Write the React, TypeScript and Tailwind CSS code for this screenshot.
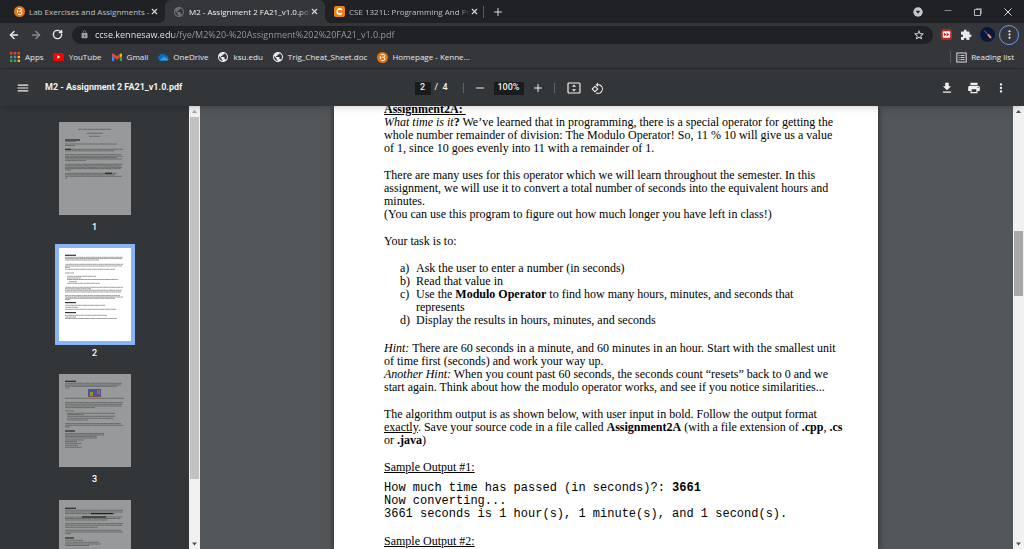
import React from 'react';
import { ArrowLeft, ArrowRight, Plus, Minus, RotateCw, X } from 'lucide-react';
import { MdDownload, MdExtension, MdLock, MdMenu, MdMoreVert, MdPrint, MdPublic, MdRotate90DegreesCcw, MdStarBorder } from 'react-icons/md';

// [x, y, width, bold]
type Row = [number, number, number, boolean?];

const page1: Row[] = [
  [19, 7.3, 33], [27.6, 11.3, 16], [30, 14.3, 11],
  [6, 18, 15, true], [6, 19.5, 11], [6, 22, 52], [6, 23.5, 10],
  [6, 27.3, 6, true], [12, 27.3, 52], [6, 28.8, 49],
  [6, 32.6, 56], [6, 34.3, 58], [6, 35.6, 52], [6, 37, 57], [6, 38.6, 21],
  [6, 42.3, 58], [6, 43.8, 56], [6, 45.3, 57], [6, 46.6, 56], [6, 48, 6],
  [6, 51.3, 52], [46, 51.3, 7, true], [6, 52.8, 50], [6, 54.3, 57], [6, 56, 2],
];

const page2: Row[] = [
  [6, 7.3, 11, true], [6, 9.3, 58], [6, 10.6, 57], [6, 12, 34],
  [6, 16.3, 58], [6, 18, 57], [6, 19.3, 5], [6, 21.3, 50], [6, 25, 9],
  [8, 28.3, 29], [8, 30, 14], [8, 31.5, 51], [10, 33.6, 8], [8, 35.3, 33],
  [6, 39.3, 58], [6, 40.8, 26], [6, 42.3, 57], [6, 44, 56],
  [6, 47.6, 55], [6, 49, 58], [6, 50.3, 50], [6, 51.6, 5],
  [6, 54.6, 11, true], [6, 57.3, 40], [6, 59.3, 13], [6, 61.3, 51],
  [6, 64.6, 11, true], [6, 67.3, 42], [6, 69, 11], [6, 70.5, 52],
];

const page3: Row[] = [
  [6, 7.3, 11, true], [6, 9.3, 57], [6, 11, 56], [6, 12.3, 52], [6, 14, 4],
  [6, 24.3, 59], [6, 28.6, 58], [6, 30.3, 57], [6, 32, 57], [6, 33.6, 30], [6, 37, 9],
  [8, 39.3, 48], [8, 40.6, 17], [8, 42.3, 48], [8, 44.3, 46], [8, 46, 21],
  [6, 49.6, 56], [6, 51.3, 58], [6, 53, 5], [6, 57, 10, true],
  [6, 59.6, 39], [6, 61, 39], [6, 62.4, 32], [6, 64, 32], [6, 66, 19],
  [6, 67.6, 12], [6, 69.3, 16], [6, 71.3, 13], [6, 73.3, 17],
];

const page4: Row[] = [
  [6, 8.3, 11, true], [6, 10.3, 58], [6, 12, 58], [6, 13.6, 50], [32, 13.6, 22, true],
  [6, 17, 57], [23, 17, 24, true], [6, 18.5, 55], [6, 20, 42],
  [6, 23.6, 58], [6, 25.3, 57], [6, 27.3, 33],
  [6, 30.3, 56], [6, 32, 58], [6, 33.6, 6], [6, 38, 9, true],
  [6, 40.3, 18], [6, 42.3, 34], [6, 44, 36], [6, 45.5, 24], [6, 49.3, 32],
];

function Thumb({ num, rows, selected, picture }: { num: number; rows: Row[]; selected?: boolean; picture?: boolean }) {
  return (
    <li className="flex flex-col items-center">
      <button
        aria-label={`Page ${num}`}
        className={selected ? 'bg-white outline-4 outline-[#8ab4f8]' : 'bg-[#98999a]'}
      >
        <svg width="72" height="93" viewBox="0 0 72 93" className="block">
          {rows.map(([x, y, w, bold], i) => (
            <line
              key={i}
              x1={x}
              x2={x + w}
              y1={y}
              y2={y}
              stroke={bold ? '#111' : '#333'}
              strokeOpacity={bold ? 0.85 : 0.6}
              strokeWidth={bold ? 1.2 : 0.8}
              strokeDasharray={bold ? undefined : '3.3 .3 1.6 .2 4.1 .3 2.2 .2'}
              strokeDashoffset={i * 3.7}
            />
          ))}
          {picture && (
            <>
              <rect x="29" y="15" width="13" height="8" fill="#4257a0" />
              <rect x="29" y="21" width="13" height="2" fill="#8a4a3c" />
              <rect x="31" y="18" width="3" height="4" fill="#a08a3c" />
              <rect x="38" y="16" width="3" height="4" fill="#b0603c" />
            </>
          )}
        </svg>
      </button>
      <span className="mt-1.5 mb-[15px] text-[9px] leading-3 font-medium text-white">{num}</span>
    </li>
  );
}

function Arrow({ down, color }: { down?: boolean; color: string }) {
  return (
    <svg width="11" height="11" viewBox="0 0 11 11" className="shrink-0">
      <path d={down ? 'M3 4.500h5L5.500 7.500z' : 'M3 7h5L5.500 4z'} fill={color} />
    </svg>
  );
}

function Globe() {
  return <MdPublic size={12} className="shrink-0" />;
}

function BrandDot() {
  return (
    <svg width="11" height="11" viewBox="0 0 11 11" className="shrink-0">
      <circle cx="5.500" cy="5.500" r="5.500" fill="#e87511" />
      <path d="M4 2.500h2.200a1.400 1.400 0 0 1 0 2.800H4.600M6.200 5.300a1.600 1.600 0 0 1 0 3.200H4.200M3.400 4v3.200" fill="none" stroke="#fff" strokeWidth="0.900" />
    </svg>
  );
}

function Tab({ icon, title, active, fade }: { icon: React.ReactNode; title: string; active?: boolean; fade?: boolean }) {
  return (
    <div className={`relative flex w-40 items-center pr-1.5 pl-2 ${active ? 'rounded-t-md bg-[#35363a]' : ''}`}>
      {active && (
        <>
          <span className="absolute bottom-0 -left-1.5 h-1.5 w-1.5 bg-[radial-gradient(circle_at_0_0,#202124_6px,#35363a_6px)]" />
          <span className="absolute -right-1.5 bottom-0 h-1.5 w-1.5 bg-[radial-gradient(circle_at_100%_0,#202124_6px,#35363a_6px)]" />
        </>
      )}
      <span className={`flex w-3 justify-center ${active ? 'text-[#6d7074]' : ''}`}>{icon}</span>
      <a
        href="#"
        className={`ml-1 flex-1 overflow-hidden whitespace-nowrap ${fade ? '[mask-image:linear-gradient(90deg,#000_90%,transparent)]' : ''} ${active ? 'text-[#f1f3f4]' : 'text-[#bdc1c6]'}`}
      >
        {title}
      </a>
      <button aria-label="Close tab" className="text-[#dadce0]">
        <X size={9} strokeWidth={3} />
      </button>
    </div>
  );
}

function Bookmark({ icon, children }: { icon: React.ReactNode; children: React.ReactNode }) {
  return (
    <a href="#" className="flex items-center gap-1 whitespace-nowrap">
      <span className="flex w-3 justify-center">{icon}</span>
      {children}
    </a>
  );
}

function BrowserBar() {
  return (
    <header className="bg-[#35363a] font-['Open_Sans','Noto_Sans',sans-serif] text-[8px] text-[#e8eaed]">
      {/* tabs */}
      <div className="flex h-[23px] bg-[#202124] pl-[5px]">
        <Tab icon={<BrandDot />} title="Lab Exercises and Assignments -" />
        <Tab active fade icon={<Globe />} title="M2 - Assignment 2 FA21_v1.0.pdf" />
        <Tab
          fade
          icon={
            <svg width="11" height="11" viewBox="0 0 11 11">
              <rect width="11" height="11" rx="2" fill="#f0810f" />
              <path d="M7.800 4A2.600 2.600 0 1 0 7.800 7" fill="none" stroke="#fff" strokeWidth="1.700" />
            </svg>
          }
          title="CSE 1321L: Programming And Pro"
        />
        <div className="flex flex-1 items-center">
          <span className="-ml-0.5 h-3 w-px bg-[#55585c]" />
          <button aria-label="New tab" className="ml-2 text-[#dadce0]">
            <Plus size={12} />
          </button>
        </div>
        <div className="flex items-center gap-5 pr-[11px] text-[#dadce0]">
          <button aria-label="Search tabs">
            <svg width="10" height="10" viewBox="0 0 10 10">
              <circle cx="5" cy="5" r="4.700" fill="#c4c7cb" />
              <path d="M2.700 3.800h4.600L5 6.800z" fill="#202124" />
            </svg>
          </button>
          <button aria-label="Minimize">
            <svg width="10" height="10" viewBox="0 0 10 10">
              <path d="M1.500 3.500h7" stroke="#85888c" />
            </svg>
          </button>
          <button aria-label="Restore">
            <svg width="10" height="10" viewBox="0 0 10 10" fill="none" stroke="#b4b7bb">
              <path d="M1.500 2.500h6v6h-6z" />
              <path d="M3 1.500h5.500V7" stroke="#75787c" />
            </svg>
          </button>
          <button aria-label="Close window">
            <svg width="10" height="10" viewBox="0 0 10 10">
              <path d="M1.500 1.500l7 7M8.500 1.500l-7 7" stroke="#dadce0" />
            </svg>
          </button>
        </div>
      </div>

      {/* address bar */}
      <div className="flex h-[23px] items-center pr-[5px] pl-2">
        <div className="flex w-16 items-center gap-2.5">
          <button aria-label="Back"><ArrowLeft size={12} strokeWidth={3} /></button>
          <button aria-label="Forward" className="text-[#85888c]"><ArrowRight size={12} strokeWidth={3} /></button>
          <button aria-label="Reload"><RotateCw size={11} strokeWidth={3} /></button>
        </div>
        <div className="flex h-[18px] flex-1 items-center rounded-full bg-[#202124] px-2">
          <MdLock size={9} className="text-[#9aa0a6]" />
          <input
            aria-label="Address"
            defaultValue="ccse.kennesaw.edu/fye/M2%20-%20Assignment%202%20FA21_v1.0.pdf"
            className="ml-1.5 flex-1 bg-[linear-gradient(90deg,#f1f3f4_79px,#9aa0a6_79px)] bg-clip-text text-[9px] text-transparent outline-none"
          />
          <button aria-label="Bookmark this page"><MdStarBorder size={12} /></button>
        </div>
        <div className="ml-2 flex items-center gap-2">
          <button aria-label="Video extension">
            <svg width="11" height="11" viewBox="0 0 11 11">
              <rect width="11" height="11" rx="2.500" fill="#c5221f" />
              <rect x="1.800" y="2.300" width="7.400" height="6.400" rx="1" fill="#fff" />
              <path d="M2.800 3.500l2.600 2-2.600 2zM5.600 3.500l2.600 2-2.600 2z" fill="#c5221f" />
            </svg>
          </button>
          <button aria-label="Extensions"><MdExtension size={12} /></button>
          <div className="flex items-center gap-1">
            <button aria-label="Profile">
              <svg width="15" height="15" viewBox="0 0 15 15">
                <circle cx="7.500" cy="7.500" r="7.500" fill="#06193a" />
                <path d="M4 3.500l6 6" stroke="#5b3a6b" strokeWidth="1.500" />
                <path d="M8 7.500l3 3.500" stroke="#e0926a" strokeWidth="2" />
              </svg>
            </button>
            <button aria-label="Customize" className="flex h-5 w-5 items-center justify-center rounded-full border border-[#669df6]">
              <MdMoreVert size={13} />
            </button>
          </div>
        </div>
      </div>

      {/* bookmarks */}
      <nav className="flex h-[22px] items-center gap-[9px] pr-2.5 pl-[9px]">
        <Bookmark
          icon={
            <svg width="10" height="10" viewBox="0 0 10 10">
              <path d="M0 0h2.400v2.400H0zM3.800 0h2.400v2.400H3.800zM7.600 0H10v2.400H7.600z" fill="#ea4335" />
              <path d="M0 3.800h2.400v2.400H0z" fill="#34a853" />
              <path d="M3.800 3.800h2.400v2.400H3.800z" fill="#4285f4" />
              <path d="M7.600 3.800H10v2.400H7.600z" fill="#fbbc04" />
              <path d="M0 7.600h2.400V10H0zM3.800 7.600h2.400V10H3.800z" fill="#34a853" />
              <path d="M7.600 7.600H10V10H7.600z" fill="#fbbc04" />
            </svg>
          }
        >
          Apps
        </Bookmark>
        <Bookmark
          icon={
            <svg width="11" height="8" viewBox="0 0 11 8">
              <rect width="11" height="8" rx="2" fill="#f00" />
              <path d="M4.300 2.200v3.600L7.400 4z" fill="#fff" />
            </svg>
          }
        >
          YouTube
        </Bookmark>
        <Bookmark
          icon={
            <svg width="10" height="8" viewBox="0 0 10 8">
              <path d="M0 1h2.200v7H0z" fill="#4285f4" />
              <path d="M7.800 1H10v7H7.800z" fill="#34a853" />
              <path d="M7.800 1.200L8.500.5Q10 0 10 1.500V3L7.800 4.600z" fill="#fbbc04" />
              <path d="M0 3V1.500Q0 0 1.500.5L5 3.200 7.800 1.100v3.500L5 6.700z" fill="#ea4335" />
            </svg>
          }
        >
          Gmail
        </Bookmark>
        <Bookmark
          icon={
            <svg width="12" height="8" viewBox="0 0 12 8">
              <path d="M3 7.500A2.500 2.500 0 0 1 2 3 3.600 3.600 0 0 1 8.400 2.300 2.700 2.700 0 0 1 9.600 7.500z" fill="#0a6cc8" />
              <path d="M2.500 7.500L7 3.800l4.600 2.600a1.600 1.600 0 0 1-1.600 1.100z" fill="#28a8ea" />
            </svg>
          }
        >
          OneDrive
        </Bookmark>
        <Bookmark icon={<Globe />}>ksu.edu</Bookmark>
        <Bookmark icon={<Globe />}>Trig_Cheat_Sheet.doc</Bookmark>
        <Bookmark icon={<BrandDot />}>Homepage - Kenne...</Bookmark>
        <span className="ml-auto h-3 w-px bg-[#55585c]" />
        <button className="-ml-1 flex items-center gap-1 whitespace-nowrap">
          <svg width="11" height="11" viewBox="0 0 11 11" fill="none" stroke="#dadce0">
            <rect x="0.800" y="1" width="9.400" height="9" />
            <path d="M2.500 3.500h1M2.500 5.500h1M2.500 7.500h1M4.500 3.500h4M4.500 5.500h4M4.500 7.500h4" strokeWidth="0.900" />
          </svg>
          Reading list
        </button>
      </nav>
    </header>
  );
}

function PdfToolbar() {
  return (
    <div className="relative z-10 flex h-[38px] shrink-0 items-center border-t border-[#242628] bg-[#323639] pt-px text-[10px] font-medium text-[#f1f1f1] shadow-md">
      <div className="flex flex-1 items-center gap-[15px] pl-4">
        <button aria-label="Menu"><MdMenu size={14} /></button>
        <h1 className="text-[9px] font-bold whitespace-nowrap">M2 - Assignment 2 FA21_v1.0.pdf</h1>
      </div>
      <div className="flex items-center pr-1.5">
        <input aria-label="Page number" defaultValue="2" className="h-[13px] w-4 bg-[#191b1c] text-center text-[9px] outline-none" />
        <span className="ml-1 w-2 text-[9px]">/</span>
        <span className="w-2 text-[9px]">4</span>
        <span className="ml-3 h-2.5 w-px bg-[#5f6366]" />
        <button aria-label="Zoom out" className="ml-2.5"><Minus size={12} /></button>
        <input aria-label="Zoom level" defaultValue="100%" className="ml-2 h-[13px] w-[30px] bg-[#191b1c] text-center text-[9px] outline-none" />
        <button aria-label="Zoom in" className="ml-2"><Plus size={12} /></button>
        <span className="ml-2.5 h-2.5 w-px bg-[#5f6366]" />
        <button aria-label="Fit to page" className="ml-3">
          <svg width="14" height="12" viewBox="0 0 14 12" fill="none" stroke="#f1f1f1">
            <rect x="1" y="1" width="12" height="10" rx="1" strokeWidth="1.200" />
            <path d="M7 2.500L9 4.800H5zM7 9.500L9 7.200H5z" fill="#f1f1f1" stroke="none" />
          </svg>
        </button>
        <button aria-label="Rotate" className="ml-2.5"><MdRotate90DegreesCcw size={13} /></button>
      </div>
      <div className="flex flex-1 items-center justify-end gap-[13px] pr-4">
        <button aria-label="Download"><MdDownload size={14} /></button>
        <button aria-label="Print"><MdPrint size={14} /></button>
        <button aria-label="More"><MdMoreVert size={14} /></button>
      </div>
    </div>
  );
}

function Sidebar() {
  return (
    <aside className="flex w-[200px] shrink-0 bg-[#323639]">
      <ul className="flex-1 overflow-hidden pt-4">
        <Thumb num={1} rows={page1} />
        <Thumb num={2} rows={page2} selected />
        <Thumb num={3} rows={page3} picture />
        <Thumb num={4} rows={page4} />
      </ul>
      <div className="flex w-[11px] flex-col bg-[#f1f1f1]">
        <Arrow color="#a3a3a3" />
        <div className="flex-1 px-px">
          <div className="h-[86%] bg-[#c1c1c1]" />
        </div>
        <Arrow down color="#505050" />
      </div>
    </aside>
  );
}

function Document() {
  return (
    <article className="w-[544px] shrink-0 bg-white pl-[50px] font-['Liberation_Serif',serif] text-[12px] leading-[13px] whitespace-nowrap text-black shadow-[0_0_6px_rgba(0,0,0,0.6)]">
      <h2 className="-mt-[3px] font-bold underline">Assignment2A:&nbsp;</h2>
      <p className="mb-3.5">
        <em>What time is it</em><b>?</b> We’ve learned that in programming, there is a special operator for getting the<br />
        whole number remainder of division: The Modulo Operator! So, 11 % 10 will give us a value<br />
        of 1, since 10 goes evenly into 11 with a remainder of 1.
      </p>
      <p className="mb-3.5">
        There are many uses for this operator which we will learn throughout the semester. In this<br />
        assignment, we will use it to convert a total number of seconds into the equivalent hours and<br />
        minutes.<br />
        (You can use this program to figure out how much longer you have left in class!)
      </p>
      <p className="mb-3.5">Your task is to:</p>
      <ol className="mb-[15px] ml-4">
        <li className="flex"><span className="w-4">a)</span>Ask the user to enter a number (in seconds)</li>
        <li className="flex"><span className="w-4">b)</span>Read that value in</li>
        <li className="flex">
          <span className="w-4">c)</span>
          <span>
            Use the <b>Modulo Operator</b> to find how many hours, minutes, and seconds that<br />
            represents
          </span>
        </li>
        <li className="flex"><span className="w-4">d)</span>Display the results in hours, minutes, and seconds</li>
      </ol>
      <p className="mb-3.5">
        <em>Hint:</em> There are 60 seconds in a minute, and 60 minutes in an hour. Start with the smallest unit<br />
        of time first (seconds) and work your way up.<br />
        <em>Another Hint:</em> When you count past 60 seconds, the seconds count “resets” back to 0 and we<br />
        start again. Think about how the modulo operator works, and see if you notice similarities...
      </p>
      <p className="mb-3.5">
        The algorithm output is as shown below, with user input in bold. Follow the output format<br />
        <u>exactly</u>. Save your source code in a file called <b>Assignment2A</b> (with a file extension of <b>.cpp</b>, <b>.cs</b><br />
        or <b>.java</b>)
      </p>
      <h3 className="mb-2 underline">Sample Output #1:</h3>
      <pre className="mb-3.5 font-['Liberation_Mono',monospace]">
        How much time has passed (in seconds)?: <b>3661</b>{'\n'}
        Now converting...{'\n'}
        3661 seconds is 1 hour(s), 1 minute(s), and 1 second(s).
      </pre>
      <h3 className="underline">Sample Output #2:</h3>
    </article>
  );
}

export default function App() {
  return (
    <div className="flex h-screen flex-col overflow-hidden bg-[#525659] font-['Roboto',sans-serif]">
      <BrowserBar />
      <PdfToolbar />
      <div className="flex min-h-0 flex-1">
        <Sidebar />
        <main className="flex flex-1 justify-center overflow-hidden pr-px">
          <Document />
        </main>
        <div className="flex w-[11px] flex-col bg-[#f1f1f1]">
          <Arrow color="#505050" />
          <div className="flex-1 px-px">
            <div className="mt-[114px] h-[65px] bg-[#a8a8a8]" />
          </div>
          <Arrow down color="#505050" />
        </div>
      </div>
    </div>
  );
}
